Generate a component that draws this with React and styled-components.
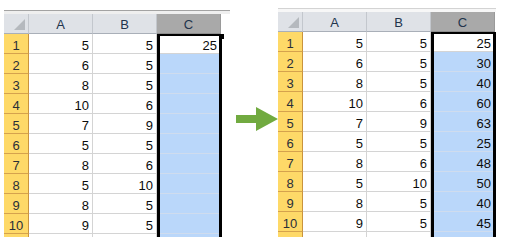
import React from 'react';
import styled, { createGlobalStyle } from 'styled-components';

const GlobalStyle = createGlobalStyle`
  html, body { margin: 0; padding: 0; background: #fff; }
  body { font-family: "Liberation Sans", Arial, sans-serif; }
`;

const Page = styled.div`
  display: flex;
  align-items: flex-start;
  width: 505px;
  height: 249px;
  overflow: hidden;
  background: #fff;
`;

const Sheet = styled.div`
  position: relative;
  flex-shrink: 0;
  margin-top: ${({ $top }) => $top}px;
  margin-left: ${({ $left }) => $left}px;
  width: ${({ $width }) => $width}px;
  height: ${({ $height }) => $height}px;
  overflow: hidden;
`;

const TopStrip = styled.div`
  box-sizing: border-box;
  height: 4px;
  border-top: 1px solid ${({ $line }) => $line};
  background: ${({ $fill }) => $fill};
`;

const Grid = styled.div`
  position: relative;
  display: grid;
  grid-template-columns: 25px 64px 64px 64px;
  grid-auto-rows: 20px;
  width: 217px;
  font-size: 13px;
  line-height: 15px;
`;

const Corner = styled.div`
  position: relative;
  box-sizing: border-box;
  background: #dfe2e7;
  border-right: 1px solid #c3c7cd;
  border-bottom: 1px solid #a9afb8;

  &::after {
    content: '';
    position: absolute;
    right: 3px;
    bottom: 3px;
    width: 11px;
    height: 11px;
    background: #b5b9be;
    clip-path: polygon(100% 0, 100% 100%, 0 100%);
  }
`;

const ColHead = styled.div`
  box-sizing: border-box;
  display: flex;
  align-items: flex-end;
  justify-content: center;
  padding-bottom: 1px;
  background: ${({ $active }) => ($active ? '#a9a9a9' : '#dfe2e7')};
  border-right: 1px solid ${({ $active }) => ($active ? '#9a9a9a' : '#c3c7cd')};
  border-bottom: 1px solid ${({ $active }) => ($active ? '#8d8d8d' : '#a9afb8')};
  color: #22344c;
`;

const RowHead = styled.div`
  box-sizing: border-box;
  display: flex;
  align-items: flex-end;
  justify-content: center;
  background: #fed968;
  border-right: 1px solid #c9933d;
  border-bottom: 1px solid #d5a24d;
  color: #2a2f38;
`;

const Cell = styled.div`
  box-sizing: border-box;
  display: flex;
  align-items: flex-end;
  justify-content: flex-end;
  padding-right: 3px;
  background: ${({ $selected }) => ($selected ? '#bad7fa' : '#fff')};
  border-right: 1px solid #d4d4d4;
  border-bottom: 1px solid ${({ $selected }) => ($selected ? '#cfdcee' : '#d4d4d4')};
  color: #0c0c0c;
`;

const Selection = styled.div`
  position: absolute;
  left: 153px;
  top: 20px;
  width: 65px;
  bottom: -20px;
  box-sizing: border-box;
  border: 3px solid #000;
  border-top-width: 2px;
  pointer-events: none;
`;

const FillHandle = styled.div`
  position: absolute;
  top: -2px;
  right: -5px;
  width: 5px;
  height: 5px;
  background: #000;
`;

const ArrowBox = styled.svg`
  flex-shrink: 0;
  margin-top: 107px;
  margin-left: 6px;
  display: block;
`;

const rowsA = [5, 6, 8, 10, 7, 5, 8, 5, 8, 9];
const rowsB = [5, 5, 5, 6, 9, 5, 6, 10, 5, 5];
const result = [25, 30, 40, 60, 63, 25, 48, 50, 40, 45];

const SheetGrid = ({ filled }) => (
  <Grid>
    <Corner />
    <ColHead>A</ColHead>
    <ColHead>B</ColHead>
    <ColHead $active>C</ColHead>
    {Array.from({ length: 11 }).map((_, i) => (
      <React.Fragment key={i}>
        <RowHead>{i < 10 ? i + 1 : ''}</RowHead>
        <Cell>{rowsA[i]}</Cell>
        <Cell>{rowsB[i]}</Cell>
        <Cell $selected={i > 0}>{i === 0 ? 25 : filled ? result[i] : ''}</Cell>
      </React.Fragment>
    ))}
    <Selection>
      <FillHandle />
    </Selection>
  </Grid>
);

export default function App() {
  return (
    <>
      <GlobalStyle />
      <Page>
        <Sheet $top={10} $left={4} $width={226} $height={227}>
          <TopStrip $line="#a3a3a3" $fill="#efefef" />
          <SheetGrid />
        </Sheet>

        <ArrowBox width="42" height="24" viewBox="0 0 42 24">
          <polygon points="0,8 20,8 20,0 42,12 20,24 20,16 0,16" fill="#71aa40" />
        </ArrowBox>

        <Sheet $top={8} $left={0} $width={218} $height={229}>
          <TopStrip $line="#d3d3d3" $fill="#f7f7f7" />
          <SheetGrid filled />
        </Sheet>
      </Page>
    </>
  );
}
